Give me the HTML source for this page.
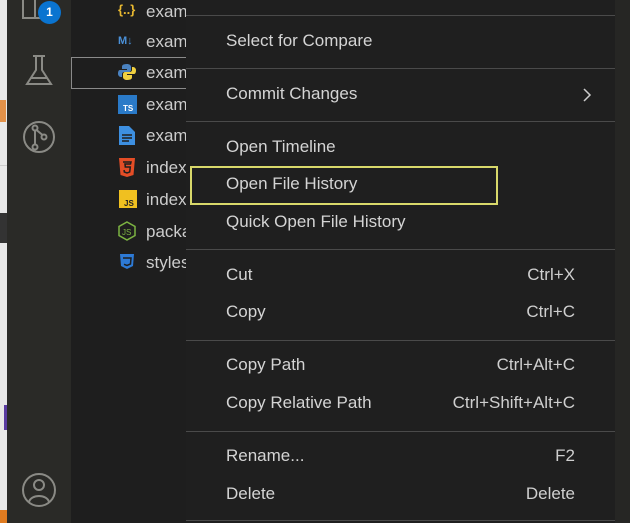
<!DOCTYPE html>
<html><head><meta charset="utf-8"><style>
*{margin:0;padding:0;box-sizing:border-box}
body{width:630px;height:523px;overflow:hidden;background:#1e1e1e;position:relative;font-family:"Liberation Sans","DejaVu Sans",sans-serif}
.a{position:absolute}
.t{position:absolute;color:#d4d4d4;font-size:17px;white-space:nowrap;line-height:20px}
.r{position:absolute;color:#cfcfcf;font-size:17px;white-space:nowrap;line-height:20px;right:55px;text-align:right}
.sep{position:absolute;left:186px;width:429px;height:1px;background:#4a4a4a}
.fn{position:absolute;left:146px;color:#cccccc;font-size:17px;line-height:20px;white-space:nowrap}
</style></head><body>
<div class="a" style="left:0;top:0;width:7px;height:523px;background:#e8e8e8"></div>
<div class="a" style="left:0;top:165px;width:7px;height:1px;background:#ccc"></div>
<div class="a" style="left:0;top:100px;width:6px;height:22px;background:#e07b20;opacity:.8"></div>
<div class="a" style="left:4px;top:405px;width:3px;height:25px;background:#5a3ca0"></div>
<div class="a" style="left:0;top:510px;width:7px;height:13px;background:#e07b20"></div>
<div class="a" style="left:0;top:213px;width:7px;height:30px;background:#333"></div>
<div class="a" style="left:7px;top:0;width:64px;height:523px;background:#2a2a27"></div>
<svg class="a" style="left:7px;top:0" width="64" height="523" fill="none" stroke="#8a8a85" stroke-width="2">
<path d="M16 0 V18 H40 M28 0 V18"/>
<path d="M26 56 H38 M29 56 V70 L20 84 H44 L35 70 V56 M24 78 H40"/>
<circle cx="32" cy="137" r="15"/>
<circle cx="28" cy="147" r="2.5"/><circle cx="28" cy="128" r="2.5"/><circle cx="37" cy="137" r="2.5"/>
<path d="M28 130 V145 M29.5 130 L35.5 135"/>
<circle cx="32" cy="490" r="16"/>
<circle cx="32" cy="485" r="5"/>
<path d="M22 502 C24 494 40 494 42 502"/>
</svg>
<div class="a" style="left:38px;top:1px;width:23px;height:23px;border-radius:50%;background:#0a74d0;color:#fff;font-size:12px;font-weight:bold;text-align:center;line-height:23px">1</div>
<div class="a" style="left:71px;top:57px;width:120px;height:32px;border:1px solid #8a8a8a"></div>
<div class="a" style="left:118px;top:2px;color:#e8b830;font-size:13px;font-weight:bold">{..}</div>
<div class="a" style="left:118px;top:35px;color:#4a90d8;font-size:11px;font-weight:bold">M↓</div>
<svg class="a" style="left:118px;top:63px" width="18" height="18"><path d="M9 1C4 1 4 3 4 4V6H9V7H2C0 7 0 10 0 11S1 14 3 14H4V11C4 10 5 9 6 9H11C12 9 13 8 13 7V4C13 2 11 1 9 1Z" fill="#4a82c0"/><path d="M9 17C14 17 14 15 14 14V12H9V11H16C18 11 18 8 18 7S17 4 15 4H14V7C14 8 13 9 12 9H7C6 9 5 10 5 11V14C5 16 7 17 9 17Z" fill="#f0d040"/></svg>
<div class="a" style="left:118px;top:95px;width:19px;height:19px;background:#2a7ac8;color:#fff;font-size:8px;font-weight:bold;padding:9px 0 0 5px;line-height:9px">TS</div>
<svg class="a" style="left:119px;top:126px" width="16" height="19"><path d="M0 0H10L16 6V19H0Z" fill="#3d8fe0"/><path d="M3 9H13M3 12H13M3 15H10" stroke="#1e1e1e" stroke-width="1.5"/></svg>
<svg class="a" style="left:119px;top:158px" width="16" height="19"><path d="M0 0H16L14.5 17L8 19L1.5 17Z" fill="#e44d26"/><path d="M4 4H12L11.5 6H6L6.3 9H11.3L10.7 14L8 15L5.3 14L5.1 12" stroke="#1e1e1e" stroke-width="1.5" fill="none"/></svg>
<div class="a" style="left:119px;top:190px;width:18px;height:18px;background:#f0c020;color:#222;font-size:8px;font-weight:bold;padding:9px 0 0 5px;line-height:9px">JS</div>
<svg class="a" style="left:118px;top:221px" width="18" height="20"><path d="M9 1L17 5.5V14.5L9 19L1 14.5V5.5Z" stroke="#7cb342" stroke-width="1.5" fill="none"/><text x="4" y="14" font-size="8" fill="#7cb342" font-family="Liberation Sans">JS</text></svg>
<svg class="a" style="left:118px;top:253px" width="18" height="18"><path d="M2 1H16L15 13L9 16L3 13" fill="#2d7ad6"/><path d="M5 5H13L12.5 11L9 12.5L6 11.3" stroke="#1e1e1e" stroke-width="1.5" fill="none"/></svg>
<div class="fn" style="top:2px">exam</div>
<div class="fn" style="top:32px">exam</div>
<div class="fn" style="top:63px">exam</div>
<div class="fn" style="top:95px">exam</div>
<div class="fn" style="top:126px">exam</div>
<div class="fn" style="top:158px">index</div>
<div class="fn" style="top:190px">index</div>
<div class="fn" style="top:222px">packa</div>
<div class="fn" style="top:253px">styles</div>
<div class="a" style="left:186px;top:0;width:429px;height:523px;background:#1f1f1f"></div>
<div class="a" style="left:615px;top:0;width:15px;height:523px;background:#262624"></div>
<div class="sep" style="top:15px"></div>
<div class="sep" style="top:68px"></div>
<div class="sep" style="top:121px"></div>
<div class="sep" style="top:249px"></div>
<div class="sep" style="top:340px"></div>
<div class="sep" style="top:431px"></div>
<div class="sep" style="top:520px"></div>
<div class="a" style="left:190px;top:166px;width:308px;height:39px;border:2px solid #d8d86a"></div>
<div class="t" style="left:226px;top:31px">Select for Compare</div>
<div class="t" style="left:226px;top:84px">Commit Changes</div>
<svg class="a" style="left:581px;top:86px" width="12" height="18"><path d="M3 3L9 9L3 15" stroke="#ccc" stroke-width="1.5" fill="none"/></svg>
<div class="t" style="left:226px;top:137px">Open Timeline</div>
<div class="t" style="left:226px;top:174px">Open File History</div>
<div class="t" style="left:226px;top:212px">Quick Open File History</div>
<div class="t" style="left:226px;top:265px">Cut</div><div class="r" style="top:265px">Ctrl+X</div>
<div class="t" style="left:226px;top:302px">Copy</div><div class="r" style="top:302px">Ctrl+C</div>
<div class="t" style="left:226px;top:355px">Copy Path</div><div class="r" style="top:355px">Ctrl+Alt+C</div>
<div class="t" style="left:226px;top:393px">Copy Relative Path</div><div class="r" style="top:393px">Ctrl+Shift+Alt+C</div>
<div class="t" style="left:226px;top:446px">Rename...</div><div class="r" style="top:446px">F2</div>
<div class="t" style="left:226px;top:484px">Delete</div><div class="r" style="top:484px">Delete</div>
</body></html>
